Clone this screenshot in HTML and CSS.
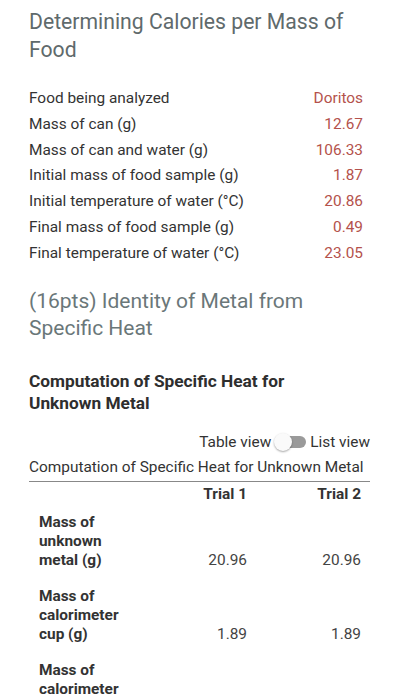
FILE: index.html
```html
<!DOCTYPE html>
<html>
<head>
<meta charset="utf-8">
<link rel="stylesheet" href="styles.css">
</head>
<body>
<div class="page">
  <h1 class="title">Determining Calories per Mass of Food</h1>
  <div class="kv">
    <div class="kv-row"><span>Food being analyzed</span><span class="val">Doritos</span></div>
    <div class="kv-row"><span>Mass of can (g)</span><span class="val">12.67</span></div>
    <div class="kv-row"><span>Mass of can and water (g)</span><span class="val">106.33</span></div>
    <div class="kv-row"><span>Initial mass of food sample (g)</span><span class="val">1.87</span></div>
    <div class="kv-row"><span>Initial temperature of water (°C)</span><span class="val">20.86</span></div>
    <div class="kv-row"><span>Final mass of food sample (g)</span><span class="val">0.49</span></div>
    <div class="kv-row"><span>Final temperature of water (°C)</span><span class="val">23.05</span></div>
  </div>
  <h2 class="subtitle">(16pts) Identity of Metal from Specific Heat</h2>
  <h3 class="section">Computation of Specific Heat for Unknown Metal</h3>
  <div class="toggle-row">
    <span>Table view</span>
    <span class="switch"><span class="track"></span><span class="knob"></span></span>
    <span>List view</span>
  </div>
  <div class="caption">Computation of Specific Heat for Unknown Metal</div>
  <div class="thead">
    <span class="c1"></span><span class="c2">Trial 1</span><span class="c3">Trial 2</span>
  </div>
  <div class="trow">
    <span class="c1 lbl">Mass of unknown metal (g)</span><span class="c2">20.96</span><span class="c3">20.96</span>
  </div>
  <div class="trow">
    <span class="c1 lbl">Mass of calorimeter cup (g)</span><span class="c2">1.89</span><span class="c3">1.89</span>
  </div>
  <div class="trow">
    <span class="c1 lbl">Mass of calorimeter and water (g)</span><span class="c2">46.95</span><span class="c3">46.95</span>
  </div>
</div>
</body>
</html>
```
FILE: styles.css
```css
html, body {
  margin: 0;
  padding: 0;
  background: #ffffff;
}
body {
  font-family: Roboto, "Liberation Sans", sans-serif;
  color: #333333;
}
.page {
  padding: 8px 31px 0 29px;
}
.title {
  margin: 0;
  font-size: 21.2px;
  font-weight: 400;
  line-height: 28px;
  color: #5f6a6c;
  padding-right: 10px;
}
.kv {
  margin-top: 22px;
  padding-right: 7px;
}
.kv-row {
  display: flex;
  justify-content: space-between;
  font-size: 15.4px;
  line-height: 25.8px;
  color: #333333;
}
.val {
  color: #b4524c;
}
.subtitle {
  margin: 21px 0 0 0;
  font-size: 21px;
  font-weight: 400;
  line-height: 27px;
  color: #6a7779;
  padding-right: 50px;
}
.section {
  margin: 28px 0 0 0;
  font-size: 17.3px;
  font-weight: 700;
  line-height: 22px;
  color: #2e2e2e;
  padding-right: 60px;
}
.toggle-row {
  margin-top: 18px;
  display: flex;
  justify-content: flex-end;
  align-items: center;
  font-size: 15.4px;
  line-height: 20px;
  color: #333333;
}
.switch {
  position: relative;
  width: 34px;
  height: 18px;
  margin: 0 2px 0 3px;
}
.track {
  position: absolute;
  left: 8px;
  top: 3px;
  width: 24px;
  height: 12px;
  border-radius: 6px;
  background: #9a9a9a;
}
.knob {
  position: absolute;
  left: 0;
  top: 0;
  width: 18px;
  height: 18px;
  border-radius: 50%;
  background: #fafafa;
  box-shadow: 0 1px 2px rgba(0,0,0,0.35);
}
.caption {
  margin-top: 5px;
  font-size: 15.4px;
  line-height: 20px;
  color: #333333;
  padding-bottom: 4px;
  border-bottom: 1.5px solid #888888;
}
.thead, .trow {
  display: grid;
  grid-template-columns: 118px 90px 114px;
  padding-left: 10px;
  font-size: 15.4px;
}
.thead {
  font-weight: 700;
  line-height: 20px;
  padding-top: 2px;
}
.c2, .c3 {
  text-align: right;
}
.trow {
  line-height: 19px;
  padding-top: 9px;
  padding-bottom: 8px;
  align-items: end;
  color: #444444;
}
.lbl {
  font-weight: 700;
  color: #333333;
  width: 92px;
}
```
